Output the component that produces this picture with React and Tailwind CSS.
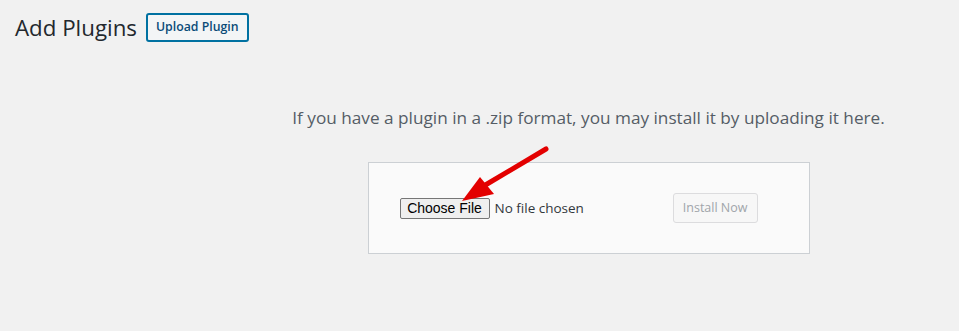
import React from "react";

const Arrow = () => (
  <svg
    className="absolute left-0 top-0 pointer-events-none"
    width="959"
    height="331"
    viewBox="0 0 959 331"
  >
    <line x1="546" y1="149" x2="482" y2="187" stroke="#e30000" strokeWidth="5" strokeLinecap="round" />
    <polygon points="462,201 480,177 494,194" fill="#e30000" />
  </svg>
);

const App = () => {
  return (
    <div
      className="relative w-[959px] h-[331px] bg-[#f1f1f1] overflow-hidden"
      style={{ fontFamily: '"Open Sans", "Noto Sans", sans-serif' }}
    >
      {/* Header */}
      <div className="flex items-center pl-[15px] pt-[13px]">
        <h1 className="text-[22.3px] leading-[29px] text-[#23282d] font-normal">Add Plugins</h1>
        <button className="ml-[9px] h-[29px] px-[8px] border-2 border-[#0071a1] rounded-[3px] bg-[#f3f5f6] text-[12.3px] font-semibold text-[#0a4b78]">
          Upload Plugin
        </button>
      </div>

      {/* Upload area */}
      <div className="flex flex-col items-center pl-[218px]">
        <p className="mt-[64px] text-[17.2px] text-[#555d66] leading-[24px]">
          If you have a plugin in a .zip format, you may install it by uploading it here.
        </p>
        <div className="mt-[32px] w-[442px] h-[92px] border border-[#ccd0d4] bg-[#fafafa] flex items-center pl-[31px] pr-[51px]">
          <div className="flex items-center">
            <div
              className="h-[21px] w-[90px] flex items-center justify-center border border-[#767676] rounded-[2px] bg-[#efefef] text-[14px] text-black"
              style={{ fontFamily: '"Liberation Sans", Arial, sans-serif' }}
            >
              Choose File
            </div>
            <span className="ml-[5px] text-[13.5px] text-[#32373c]">No file chosen</span>
          </div>
          <button className="ml-auto h-[30px] px-[9px] border border-[#dcdcde] rounded-[3px] bg-[#f7f7f7] text-[12.5px] text-[#a0a5aa]">
            Install Now
          </button>
        </div>
      </div>

      <Arrow />
    </div>
  );
};

export default App;
